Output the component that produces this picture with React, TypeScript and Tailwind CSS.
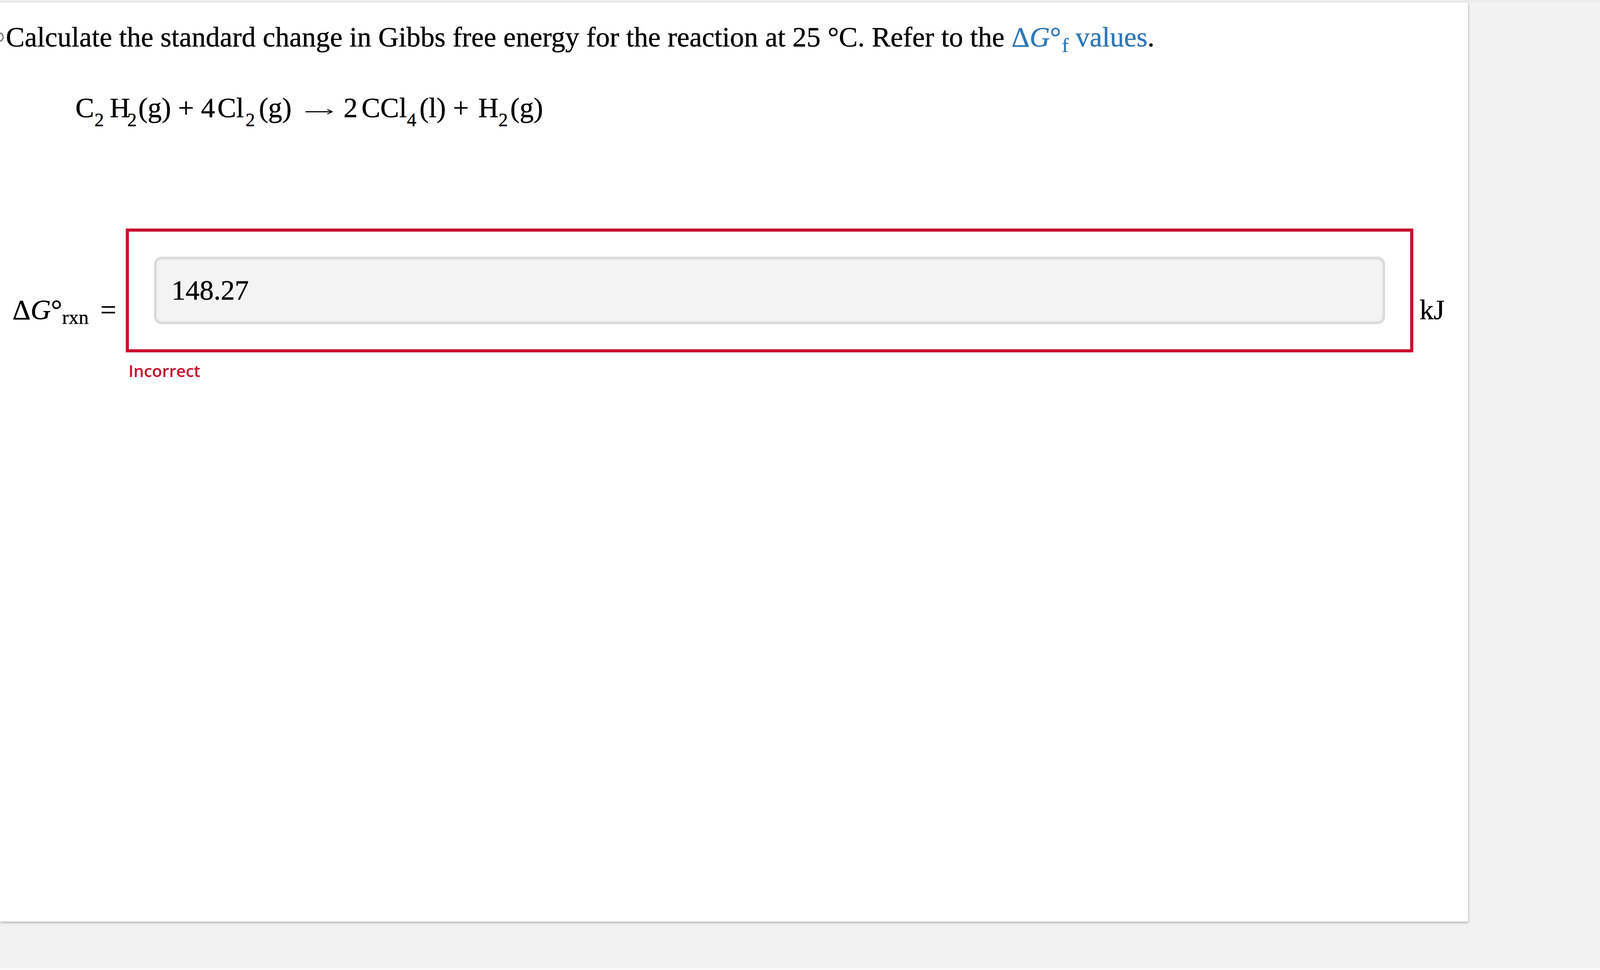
export default function App() {
  return (
    <div className="w-[4117px] h-[2483px] bg-[#f2f2f2] flex flex-col overflow-hidden font-['Liberation_Serif','Times_New_Roman',serif] text-black">
      <div className="h-[7px] shrink-0 bg-[#ececec]" />

      <main className="w-[3758px] h-[2352px] shrink-0 bg-white shadow-[1px_3px_6px_rgba(0,0,0,0.28)] pt-[45px] [-webkit-text-stroke:0.6px]">
        {/* question text */}
        <p className="text-[72px] leading-[86px] whitespace-nowrap">
          <svg className="inline-block align-[12px]" width="15" height="24" viewBox="0 0 15 24">
            <path d="M0 2 A8 10 0 0 1 0 22" fill="none" stroke="#777" strokeWidth="3.5" />
          </svg>
          Calculate the standard change in Gibbs free energy for the reaction at 25 °C. Refer to the{' '}
          <a href="#" className="text-[#2f78b9]">
            Δ<i>G</i>°<sub className="text-[51px] bottom-[-14px] ml-[2px]">f</sub> values
          </a>
          .
        </p>

        {/* reaction */}
        <p className="mt-[95px] ml-[193px] text-[72px] leading-[86px] whitespace-nowrap">
          C<sub className="text-[48px] bottom-[-23px] ml-[1px] mr-[15px]">2</sub>H
          <sub className="text-[48px] bottom-[-23px] ml-[-7px] mr-[4px]">2</sub>(g) + 4<span className="ml-[6px]">Cl</span>
          <sub className="text-[48px] bottom-[-23px] ml-[4px] mr-[10px]">2</sub>(g)
          <svg className="inline-block ml-[35px] mr-[28px] align-[6px]" width="70" height="16" viewBox="0 0 70 16">
            <path d="M0 8 H66" stroke="#000" strokeWidth="3" />
            <path d="M56 2 L68 8 L56 14" fill="none" stroke="#000" strokeWidth="2.5" />
          </svg>
          2<span className="ml-[10px]">CCl</span>
          <sub className="text-[48px] bottom-[-23px] mr-[8px]">4</sub>(l) + <span className="ml-[6px]">H</span>
          <sub className="text-[48px] bottom-[-23px] mr-[6px]">2</sub>(g)
        </p>

        {/* answer row */}
        <div className="mt-[266px] flex items-start">
          <div className="w-[322px] shrink-0 pl-[32px] mt-[165px] text-[72px] leading-[86px] whitespace-nowrap">
            Δ<i>G</i>°<sub className="text-[51px] bottom-[-12px]">rxn</sub>
            <span className="ml-[30px]">=</span>
          </div>

          <div className="shrink-0">
            <div className="w-[3296px] h-[317px] border-[8px] border-[#c8102e] p-[64px]">
              <input
                readOnly
                value="148.27"
                className="w-full h-[173px] border-[7px] border-[#dcdcdc] bg-[#f3f3f3] rounded-[20px] px-[38px] text-[72px] leading-[86px] text-black outline-none font-['Liberation_Serif','Times_New_Roman',serif] [-webkit-text-stroke:0.6px]"
              />
            </div>
            <p className="mt-[22px] ml-[7px] text-[42px] leading-[50px] font-semibold text-[#c8102e] font-['Open_Sans',sans-serif] [-webkit-text-stroke:0px]">
              Incorrect
            </p>
          </div>

          <div className="ml-[16px] mt-[165px] text-[72px] leading-[86px]">kJ</div>
        </div>
      </main>

      <div className="flex-1" />
      <div className="h-[4px] shrink-0 bg-[#fafafa]" />
    </div>
  );
}
